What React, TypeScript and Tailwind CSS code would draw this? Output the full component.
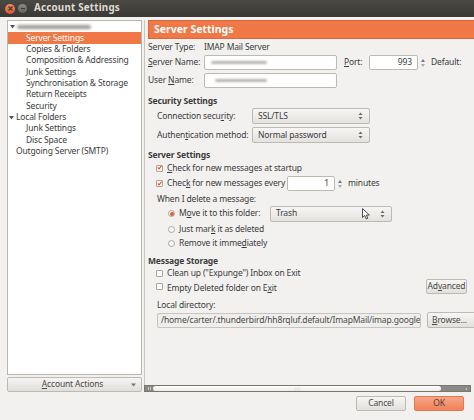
import React from 'react';

const font = { fontFamily: '"Noto Sans", "DejaVu Sans", sans-serif' };

function U({ children }: { children: React.ReactNode }) {
    return <span className="underline underline-offset-[1px] decoration-[0.5px]">{children}</span>;
}

function Arrows() {
    return (
        <svg width="5" height="8" viewBox="0 0 5 8" className="shrink-0">
            <path d="M2.5 0.5 L4.5 3 L0.5 3 Z" fill="#6a6a6a" />
            <path d="M2.5 7.5 L4.5 5 L0.5 5 Z" fill="#6a6a6a" />
        </svg>
    );
}

function SpinArrows() {
    return (
        <div className="flex flex-col items-center justify-center w-[6px] gap-[2px]">
            <svg width="4" height="3" viewBox="0 0 4 3"><path d="M2 0 L4 3 L0 3 Z" fill="#777" /></svg>
            <svg width="4" height="3" viewBox="0 0 4 3"><path d="M2 3 L4 0 L0 0 Z" fill="#aaa" /></svg>
        </div>
    );
}

function Checkbox({ checked }: { checked?: boolean }) {
    return (
        <div className="w-[7px] h-[7px] shrink-0 border border-[#a9a69f] bg-[#f8f8f7] rounded-[1px] flex items-center justify-center">
            {checked && (
                <svg width="7" height="7" viewBox="0 0 7 7" className="-mt-[1px]">
                    <path d="M1 3.5 L3 5.5 L6.5 0.8" stroke="#e9592b" strokeWidth="1.6" fill="none" />
                </svg>
            )}
        </div>
    );
}

function Radio({ checked }: { checked?: boolean }) {
    return (
        <div className="w-[7px] h-[7px] shrink-0 rounded-full border border-[#a9a69f] bg-[#f8f8f7] flex items-center justify-center">
            {checked && <div className="w-[4px] h-[4px] rounded-full bg-[#e9592b]" />}
        </div>
    );
}

function Select({ value, width }: { value: string; width: string }) {
    return (
        <div className={`${width} h-[16px] flex items-center justify-between pl-[5px] pr-[6px] border border-[#bdbab3] rounded-[2px] bg-gradient-to-b from-[#f7f6f5] to-[#e4e2df] text-[#3c3c3c]`}>
            <span>{value}</span>
            <Arrows />
        </div>
    );
}

function Button({ children, width, primary }: { children: React.ReactNode; width: string; primary?: boolean }) {
    return (
        <div
            className={`${width} h-[15px] shrink-0 flex items-center justify-center rounded-[2px] border ${
                primary
                    ? 'border-[#e07a55] bg-gradient-to-b from-[#f7a587] to-[#ef8159] text-[#5e3a2c]'
                    : 'border-[#bdbab3] bg-gradient-to-b from-[#f7f6f5] to-[#e2e0dc] text-[#4a4a4a]'
            }`}
        >
            {children}
        </div>
    );
}

const treeItems: { label: string; indent: number; arrow?: boolean; selected?: boolean; blur?: boolean }[] = [
    { label: '', indent: 9, arrow: true, blur: true },
    { label: 'Server Settings', indent: 18, selected: true },
    { label: 'Copies & Folders', indent: 18 },
    { label: 'Composition & Addressing', indent: 18 },
    { label: 'Junk Settings', indent: 18 },
    { label: 'Synchronisation & Storage', indent: 18 },
    { label: 'Return Receipts', indent: 18 },
    { label: 'Security', indent: 18 },
    { label: 'Local Folders', indent: 8, arrow: true },
    { label: 'Junk Settings', indent: 18 },
    { label: 'Disc Space', indent: 18 },
    { label: 'Outgoing Server (SMTP)', indent: 8 },
];

export default function App() {
    return (
        <div className="w-[474px] h-[420px] overflow-hidden bg-[#f2f1f0] flex flex-col text-[8.5px] tracking-[-0.15px] text-[#3c3c3c] whitespace-nowrap" style={font}>
            {/* title bar */}
            <div className="h-[17px] shrink-0 bg-gradient-to-b from-[#4a4944] to-[#3a3935] flex items-center pl-[5px]">
                <div className="w-[10px] h-[10px] rounded-full bg-gradient-to-b from-[#f48a5f] to-[#e0562a] flex items-center justify-center">
                    <svg width="5" height="5" viewBox="0 0 5 5"><path d="M0.5 0.5 L4.5 4.5 M4.5 0.5 L0.5 4.5" stroke="#3c3b37" strokeWidth="1.2" /></svg>
                </div>
                <div className="w-[9px] h-[9px] rounded-full bg-gradient-to-b from-[#8a8884] to-[#65635f] ml-[3px] flex items-center justify-center">
                    <div className="w-[4px] h-[1px] bg-[#3c3b37]" />
                </div>
                <span className="ml-[7px] text-[9.8px] font-bold text-[#dfdbd2] tracking-[0.2px]">Account Settings</span>
            </div>

            <div className="flex flex-1 min-h-0">
                {/* left column */}
                <div className="w-[144px] shrink-0 pl-[7px] pt-[3px] pr-[2px] flex flex-col">
                    <div className="h-[355px] bg-white border border-[#b9b6ae]">
                        {treeItems.map((it, i) => (
                            <div
                                key={i}
                                className={`h-[11.33px] flex items-center leading-none ${it.selected ? 'bg-[#f07746] text-white' : ''}`}
                                style={{ paddingLeft: it.arrow ? it.indent - 7 : it.indent }}
                            >
                                {it.arrow && (
                                    <svg width="5" height="5" viewBox="0 0 5 5" className="mr-[2px]">
                                        <path d="M0 1 L5 1 L2.5 4.5 Z" fill="#555" />
                                    </svg>
                                )}
                                {it.blur ? (
                                    <div className="h-[4px] w-[74px] rounded-full bg-[#9c9a96] blur-[1.5px]" />
                                ) : (
                                    <span>{it.label}</span>
                                )}
                            </div>
                        ))}
                    </div>
                    <div className="mt-[2px] h-[15px] flex items-center border border-[#bdbab3] rounded-[2px] bg-gradient-to-b from-[#f6f5f4] to-[#e1dfdb] text-[#4a4a4a]">
                        <span className="flex-1 text-center pl-[6px]">
                            <U>A</U>ccount Actions
                        </span>
                        <svg width="5" height="4" viewBox="0 0 5 4" className="mr-[5px]">
                            <path d="M0 0.5 L5 0.5 L2.5 3.5 Z" fill="#777" />
                        </svg>
                    </div>
                </div>

                {/* right column */}
                <div className="flex-1 min-w-0 flex flex-col pt-[3px]">
                    <div className="h-[365px] border-l border-[#c9c6bf] overflow-hidden flex flex-col pl-[3px]">
                        <div className="h-[19px] shrink-0 w-[330px] bg-[#f07746] border border-[#d9683c] flex items-center pl-[5px] text-white font-bold text-[10.5px] tracking-normal">
                            Server Settings
                        </div>
                        <div className="w-[330px] flex flex-col">
                            <div className="mt-[2px] h-[12px] flex items-center">
                                <span className="w-[56px]">Server Type:</span>
                                <span>IMAP Mail Server</span>
                            </div>
                            <div className="mt-[2px] h-[15px] flex items-center">
                                <span className="w-[56px]"><U>S</U>erver Name:</span>
                                <div className="w-[133px] h-[15px] bg-white border border-[#bdbab3] rounded-[2px] flex items-center pl-[6px]">
                                    <div className="h-[3px] w-[56px] rounded-full bg-[#b5b3af] blur-[1.2px]" />
                                </div>
                                <span className="ml-[7px] w-[25px]"><U>P</U>ort:</span>
                                <div className="w-[49px] h-[15px] bg-white border border-[#bdbab3] rounded-[2px] flex items-center justify-end pr-[5px]">993</div>
                                <div className="ml-[2px]"><SpinArrows /></div>
                                <span className="ml-[5px]">Default:</span>
                            </div>
                            <div className="mt-[3px] h-[15px] flex items-center">
                                <span className="w-[56px]">User <U>N</U>ame:</span>
                                <div className="w-[133px] h-[15px] bg-white border border-[#bdbab3] rounded-[2px] flex items-center pl-[10px]">
                                    <div className="h-[3px] w-[52px] rounded-full bg-[#b5b3af] blur-[1.2px]" />
                                </div>
                            </div>

                            <div className="mt-[7px] h-[12px] flex items-center font-bold">Security Settings</div>
                            <div className="mt-[1px] h-[16px] flex items-center pl-[9px]">
                                <span className="w-[95px]">Connection secu<U>r</U>ity:</span>
                                <Select value="SSL/TLS" width="w-[118px]" />
                            </div>
                            <div className="mt-[3px] h-[16px] flex items-center pl-[9px]">
                                <span className="w-[95px]">Authen<U>t</U>ication method:</span>
                                <Select value="Normal password" width="w-[118px]" />
                            </div>

                            <div className="mt-[6px] h-[12px] flex items-center font-bold">Server Settings</div>
                            <div className="mt-[1px] h-[12px] flex items-center pl-[8px]">
                                <Checkbox checked />
                                <span className="ml-[4px]"><U>C</U>heck for new messages at startup</span>
                            </div>
                            <div className="mt-[2px] h-[15px] flex items-center pl-[8px]">
                                <Checkbox checked />
                                <span className="ml-[4px] w-[120px] shrink-0">Chec<U>k</U> for new messages every</span>
                                <div className="w-[48px] h-[15px] shrink-0 bg-white border border-[#bdbab3] rounded-[2px] flex items-center justify-end pr-[5px]">1</div>
                                <div className="ml-[2px]"><SpinArrows /></div>
                                <span className="ml-[5px]">minutes</span>
                            </div>
                            <div className="mt-[2px] h-[12px] flex items-center pl-[9px]">When I delete a message:</div>
                            <div className="mt-[1px] h-[15px] flex items-center pl-[20px]">
                                <Radio checked />
                                <span className="ml-[4px] w-[91px]">M<U>o</U>ve it to this folder:</span>
                                <div className="relative">
                                    <Select value="Trash" width="w-[122px]" />
                                    <svg width="8" height="12" viewBox="0 0 8 12" className="absolute left-[92px] top-[2px]">
                                        <path d="M0.5 0.5 L0.5 9.5 L2.8 7.5 L4.3 11 L5.8 10.3 L4.4 7 L7.3 7 Z" fill="#fff" stroke="#222" strokeWidth="0.8" />
                                    </svg>
                                </div>
                            </div>
                            <div className="mt-[2px] h-[12px] flex items-center pl-[20px]">
                                <Radio />
                                <span className="ml-[4px]">Just mar<U>k</U> it as deleted</span>
                            </div>
                            <div className="mt-[2px] h-[12px] flex items-center pl-[20px]">
                                <Radio />
                                <span className="ml-[4px]">Remove it imme<U>d</U>iately</span>
                            </div>

                            <div className="mt-[6px] h-[12px] flex items-center font-bold">Message Storage</div>
                            <div className="h-[12px] flex items-center pl-[8px]">
                                <Checkbox />
                                <span className="ml-[4px]">Clean up ("Expunge") Inbox on Exit</span>
                            </div>
                            <div className="h-[15px] flex items-center pl-[8px]">
                                <Checkbox />
                                <span className="ml-[4px] mt-[3px] flex-1">Empty Deleted folder on E<U>x</U>it</span>
                                <Button width="w-[41px] mr-[11px]">Ad<U>v</U>anced</Button>
                            </div>
                            <div className="mt-[5px] h-[12px] flex items-center pl-[9px]">Local directory:</div>
                            <div className="mt-[1px] h-[16px] flex items-center pl-[9px]">
                                <div className="w-[264px] h-[15px] shrink-0 border border-[#c7c4bd] rounded-[2px] bg-[#efeeec] flex items-center pl-[3px] overflow-hidden text-[#4a4a4a]">
                                    /home/carter/.thunderbird/hh8rqluf.default/ImapMail/imap.googlemail.com
                                </div>
                                <div className="ml-[6px] w-[50px] h-[16px] shrink-0 flex items-center pl-[4px] rounded-[2px] border border-[#bdbab3] bg-gradient-to-b from-[#f7f6f5] to-[#e2e0dc] text-[#4a4a4a]">
                                    <U>B</U>rowse...
                                </div>
                            </div>
                        </div>
                    </div>
                    {/* horizontal scrollbar */}
                    <div className="h-[7px] w-[327px] shrink-0 flex items-center bg-[#8a8985] border border-[#77766f]">
                        <div className="w-[8px] flex items-center justify-center gap-[1px]">
                            <div className="w-[1px] h-[3px] bg-[#c9c8c4]" />
                            <div className="w-[1px] h-[3px] bg-[#c9c8c4]" />
                        </div>
                        <div className="w-[288px] h-[5px] rounded-full bg-gradient-to-b from-[#ffffff] to-[#ecebe8] flex items-center justify-center">
                            <div className="text-[4px] leading-none text-[#bbb]">|||</div>
                        </div>
                        <div className="flex-1 flex justify-end pr-[3px]">
                            <div className="w-[1px] h-[2px] bg-[#c9c8c4]" />
                        </div>
                    </div>
                    <div className="mt-[4px] flex justify-end pr-[10px] gap-[8px]">
                        <Button width="w-[50px]">Cancel</Button>
                        <Button width="w-[50px]" primary>OK</Button>
                    </div>
                </div>
            </div>
        </div>
    );
}
